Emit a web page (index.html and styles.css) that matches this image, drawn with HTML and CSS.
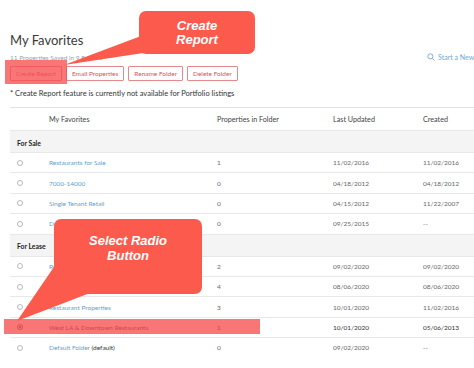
FILE: index.html
```html
<!DOCTYPE html>
<html lang="en">
<head>
    <meta charset="UTF-8">
    <title>My Favorites</title>
    <link rel="stylesheet" href="styles.css">
</head>
<body>
    <div class="page">
        <h1 class="title">My Favorites</h1>

        <div class="sub-row">
            <span class="saved">11 Properties Saved in 9 Folders</span>
            <a class="new-search" href="#">
                <svg width="8" height="8" viewBox="0 0 10 10"><circle cx="4.2" cy="4.2" r="3.2" fill="none" stroke="#6fa9d6" stroke-width="1.1"/><line x1="6.6" y1="6.6" x2="9.3" y2="9.3" stroke="#6fa9d6" stroke-width="1.1"/></svg>
                <span>Start a New Search</span>
            </a>
        </div>

        <div class="actions">
            <button class="btn">Create Report</button>
            <button class="btn">Email Properties</button>
            <button class="btn">Rename Folder</button>
            <button class="btn">Delete Folder</button>
        </div>

        <p class="note">* Create Report feature is currently not available for Portfolio listings</p>

        <table class="fav-table">
            <colgroup>
                <col class="c-radio"><col class="c-name"><col class="c-count"><col class="c-upd"><col class="c-created">
            </colgroup>
            <thead>
                <tr>
                    <th></th>
                    <th>My Favorites</th>
                    <th>Properties in Folder</th>
                    <th>Last Updated</th>
                    <th>Created</th>
                </tr>
            </thead>
            <tbody>
                <tr class="group"><td colspan="5">For Sale</td></tr>
                <tr>
                    <td><span class="radio"></span></td>
                    <td><a href="#">Restaurants for Sale</a></td>
                    <td>1</td><td>11/02/2016</td><td>11/02/2016</td>
                </tr>
                <tr>
                    <td><span class="radio"></span></td>
                    <td><a href="#">7000-14000</a></td>
                    <td>0</td><td>04/18/2012</td><td>04/18/2012</td>
                </tr>
                <tr>
                    <td><span class="radio"></span></td>
                    <td><a href="#">Single Tenant Retail</a></td>
                    <td>0</td><td>04/15/2012</td><td>11/22/2007</td>
                </tr>
                <tr>
                    <td><span class="radio"></span></td>
                    <td><a href="#">Default Folder</a></td>
                    <td>0</td><td>09/25/2015</td><td>--</td>
                </tr>
                <tr class="group"><td colspan="5">For Lease</td></tr>
                <tr>
                    <td><span class="radio"></span></td>
                    <td><a href="#">Restaurant Space</a></td>
                    <td>2</td><td>09/02/2020</td><td>09/02/2020</td>
                </tr>
                <tr>
                    <td><span class="radio"></span></td>
                    <td><a href="#">Retail Centers</a></td>
                    <td>4</td><td>08/06/2020</td><td>08/06/2020</td>
                </tr>
                <tr>
                    <td><span class="radio"></span></td>
                    <td><a href="#">Restaurant Properties</a></td>
                    <td>3</td><td>10/01/2020</td><td>11/02/2016</td>
                </tr>
                <tr class="selected">
                    <td><span class="radio checked"></span></td>
                    <td>West LA &amp; Downtown Restaurants</td>
                    <td>1</td><td>10/01/2020</td><td>05/06/2013</td>
                </tr>
                <tr>
                    <td><span class="radio"></span></td>
                    <td><a href="#">Default Folder</a> <span class="dark">(default)</span></td>
                    <td>0</td><td>09/02/2020</td><td>--</td>
                </tr>
            </tbody>
        </table>
    </div>

    <!-- annotation overlays -->
    <div class="mark mark-report"></div>
    <div class="mark mark-row"></div>

    <svg class="tails" width="474" height="368">
        <polygon points="141,36 150,52 64,65" fill="#fb5a4d"/>
        <polygon points="56,264 90,293 17,321" fill="#fb5a4d"/>
    </svg>
    <div class="callout callout-report">Create<br>Report</div>
    <div class="callout callout-radio">Select Radio<br>Button</div>
</body>
</html>
```

FILE: styles.css
```css
body {
    margin: 0;
    font-family: 'Lato', 'Noto Sans', sans-serif;
    color: #333;
    background: #fff;
    position: relative;
    width: 474px;
    height: 368px;
    overflow: hidden;
}

.page {
    padding: 31px 0 0 10px;
}

.title {
    margin: 0;
    font-size: 13px;
    font-weight: 400;
    color: #3a3a3a;
    line-height: 18px;
}

.sub-row {
    display: flex;
    align-items: center;
    height: 14px;
    margin-top: 1px;
}

.saved {
    flex: 0 0 417px;
    font-size: 6.5px;
    color: #8da3b5;
}

.new-search {
    flex: 0 0 auto;
    font-size: 7px;
    color: #6fa9d6;
    text-decoration: none;
    white-space: nowrap;
    display: flex;
    align-items: center;
    gap: 3px;
}

.actions {
    display: flex;
    gap: 4px;
    margin-top: 2px;
}

.btn {
    font-family: inherit;
    font-size: 6.5px;
    color: #d9535a;
    background: #fff;
    border: 1px solid #e48a8f;
    border-radius: 1px;
    height: 15px;
    padding: 0 5px;
}

.note {
    margin: 8px 0 0;
    font-size: 7.5px;
    line-height: 10px;
    color: #333;
}

.fav-table {
    margin-top: 8px;
    width: 470px;
    border-collapse: collapse;
    table-layout: fixed;
    font-size: 6.5px;
    color: #666;
}

.c-radio { width: 39px; }
.c-name { width: 168px; }
.c-count { width: 116px; }
.c-upd { width: 90px; }
.c-created { width: 57px; }

.fav-table th {
    text-align: left;
    font-weight: 400;
    font-size: 7.2px;
    color: #444;
    height: 22px;
    border-top: 1px solid #e2e2e2;
    padding: 0;
}

.fav-table td {
    height: 19.4px;
    padding: 0;
    border-top: 1px solid #e8e8e8;
    white-space: nowrap;
    overflow: hidden;
}

.fav-table td:first-child {
    padding-left: 7px;
}

.fav-table tr.group td {
    background: #f4f4f4;
    font-weight: 700;
    color: #222;
    font-size: 6.8px;
    padding-left: 7px;
    padding-top: 2px;
    height: 19px;
}

.fav-table a {
    color: #5f9fcf;
    text-decoration: none;
}

.dark {
    color: #333;
}

.radio {
    display: block;
    width: 6px;
    height: 6px;
    border: 1px solid #b9b9b9;
    border-radius: 50%;
    box-sizing: border-box;
    position: relative;
}

.radio.checked {
    border-color: #555;
}

.radio.checked::after {
    content: '';
    position: absolute;
    left: 1px;
    top: 1px;
    width: 2px;
    height: 2px;
    border-radius: 50%;
    background: #222;
}

.fav-table tr.selected td {
    color: #333;
}

.mark {
    position: absolute;
    background: rgba(246, 80, 80, 0.78);
}

.mark-report {
    left: 5px;
    top: 60px;
    width: 62px;
    height: 24px;
}

.mark-row {
    left: 4px;
    top: 319px;
    width: 256px;
    height: 15px;
}

.tails {
    position: absolute;
    left: 0;
    top: 0;
}

.callout {
    position: absolute;
    background: #fb5a4d;
    border-radius: 7px;
    color: #fff;
    font-family: 'Liberation Sans', Arial, sans-serif;
    font-weight: 700;
    font-style: italic;
    font-size: 13px;
    line-height: 14px;
    text-align: center;
    box-sizing: border-box;
}

.callout-report {
    left: 139px;
    top: 11px;
    width: 116px;
    height: 43px;
    padding-top: 8px;
}

.callout-radio {
    left: 54px;
    top: 219px;
    width: 148px;
    height: 75px;
    padding-top: 14px;
    line-height: 15px;
}
```
